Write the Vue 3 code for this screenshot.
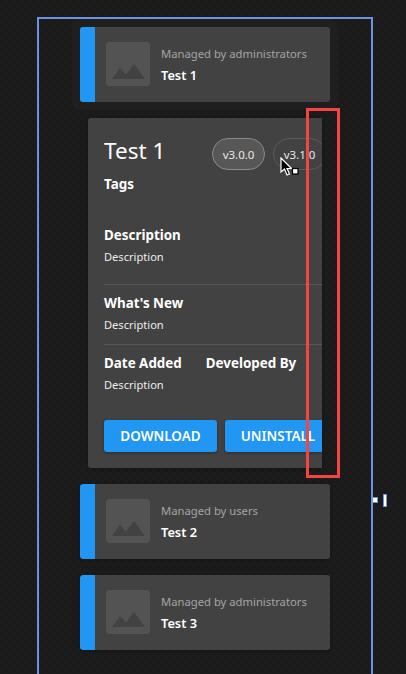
<script setup>
const cards = [
  { by: 'Managed by administrators', name: 'Test 1' },
  { by: 'Managed by users', name: 'Test 2' },
  { by: 'Managed by administrators', name: 'Test 3' },
]
</script>

<template>
  <div class="page">
    <div class="stack">
      <div class="card card-hover">
        <span class="stripe"></span>
        <div class="thumb">
          <svg viewBox="0 0 44 44" width="44" height="44"><path d="M6 37 14 26 20 32.5 28 22 39 37Z" /></svg>
        </div>
        <div class="meta">
          <div class="by">{{ cards[0].by }}</div>
          <div class="name">{{ cards[0].name }}</div>
        </div>
      </div>

      <section class="detail">
        <div class="head">
          <h1 class="title">Test 1</h1>
          <div class="pills">
            <span class="pill active">v3.0.0</span>
            <span class="pill">v3.1.0</span>
          </div>
        </div>
        <h2 class="label tags">Tags</h2>
        <div class="block first">
          <h2 class="label">Description</h2>
          <p class="text">Description</p>
        </div>
        <div class="block">
          <h2 class="label">What's New</h2>
          <p class="text">Description</p>
        </div>
        <div class="block last">
          <div class="columns">
            <h2 class="label">Date Added</h2>
            <h2 class="label">Developed By</h2>
          </div>
          <p class="text">Description</p>
        </div>
        <div class="actions">
          <button class="btn">DOWNLOAD</button>
          <button class="btn">UNINSTALL</button>
        </div>
      </section>

      <div v-for="c in cards.slice(1)" :key="c.name" class="card">
        <span class="stripe"></span>
        <div class="thumb">
          <svg viewBox="0 0 44 44" width="44" height="44"><path d="M6 37 14 26 20 32.5 28 22 39 37Z" /></svg>
        </div>
        <div class="meta">
          <div class="by">{{ c.by }}</div>
          <div class="name">{{ c.name }}</div>
        </div>
      </div>
    </div>

    <div class="frame"></div>
    <div class="handle"></div>
    <div class="caret"></div>
    <div class="redbox"></div>
    <svg class="cursor" viewBox="0 0 20 20" width="20" height="20">
      <path d="M1 1V15L4.5 12 7 18 9.5 17 7 11.5H11.5Z" fill="#000" stroke="#fff" stroke-width="1.2" />
      <rect x="12.5" y="11.5" width="5.5" height="5.5" fill="#fff" stroke="#000" stroke-width="1.2" />
    </svg>
  </div>
</template>

<style scoped>
.page {
  position: relative;
  width: 406px;
  height: 674px;
  overflow: hidden;
  box-sizing: border-box;
  padding: 27px 0 0 80px;
  background: repeating-conic-gradient(#1c1c1c 0 25%, #1a1a1a 0 50%) 0 0 / 8px 8px;
  font-family: "Noto Sans", "Open Sans", sans-serif;
  color: #fff;
}
.stack {
  width: 250px;
  display: flex;
  flex-direction: column;
  gap: 16px;
}
.card {
  position: relative;
  height: 75px;
  display: flex;
  align-items: center;
  box-sizing: border-box;
  padding-left: 26px;
  gap: 11px;
  background: #424242;
  border-radius: 3px;
  overflow: hidden;
  box-shadow: 0 1px 3px rgba(0, 0, 0, .3);
}
.card-hover {
  overflow: visible;
  box-shadow: 0 0 0 8px #1f1f1f;
}
.stripe {
  position: absolute;
  left: 0;
  top: 0;
  bottom: 0;
  width: 15px;
  background: #2196f3;
  border-radius: 3px 0 0 3px;
}
.thumb {
  width: 44px;
  height: 44px;
  margin-bottom: 1px;
  border-radius: 4px;
  background: #535353;
  flex: none;
}
.thumb svg {
  display: block;
  fill: #424242;
}
.meta {
  display: flex;
  flex-direction: column;
  gap: 2px;
}
.by {
  font-size: 11.25px;
  line-height: 18px;
  color: #a4a4a4;
}
.name {
  font-size: 12.8px;
  line-height: 20px;
  font-weight: 600;
}
.detail {
  margin: 0 8px;
  height: 350px;
  box-sizing: border-box;
  padding: 16px;
  background: #424242;
  border-radius: 3px 0 0 3px;
  overflow: hidden;
  box-shadow: 0 1px 3px rgba(0, 0, 0, .3);
}
.head {
  display: flex;
  justify-content: space-between;
  width: 222px;
  height: 36px;
}
.title {
  margin: 0;
  font-size: 22.5px;
  line-height: 34px;
  font-weight: 400;
}
.pills {
  display: flex;
  gap: 8px;
  margin-top: 4px;
}
.pill {
  width: 53px;
  height: 32px;
  flex: none;
  box-sizing: border-box;
  display: flex;
  align-items: center;
  justify-content: center;
  border-radius: 16px;
  border: 1px solid #5a5a5a;
  font-size: 11.5px;
  color: #e8e8e8;
}
.pill.active {
  background: #575757;
  border-color: #8a8a8a;
}
.label {
  margin: 0;
  font-size: 13.4px;
  line-height: 20px;
  font-weight: 700;
}
.tags {
  margin-top: 4px;
}
.block {
  width: 240px;
  border-top: 1px solid #585858;
  padding-top: 8px;
  height: 51px;
}
.block.first {
  border-top: 0;
  margin-top: 31px;
  padding-top: 0;
  height: 59px;
}
.block.last {
  height: 56px;
}
.text {
  margin: 3px 0 0;
  font-size: 11.1px;
  line-height: 18px;
  color: #ececec;
}
.columns {
  display: flex;
  gap: 24px;
}
.actions {
  display: flex;
  gap: 8px;
  margin-top: 11px;
}
.btn {
  flex: none;
  width: 113px;
  height: 32px;
  border: 0;
  border-radius: 3px;
  background: #2196f3;
  color: #fff;
  font-family: inherit;
  font-size: 13.5px;
  font-weight: 600;
  box-shadow: 0 1px 3px rgba(0, 0, 0, .35);
}
.btn:last-child {
  width: 106px;
}
.frame {
  position: absolute;
  left: 37px;
  top: 17px;
  width: 336px;
  height: 700px;
  box-sizing: border-box;
  border: 2px solid #6a92e6;
}
.handle {
  position: absolute;
  left: 372px;
  top: 497px;
  width: 4px;
  height: 4px;
  background: #fff;
  border: 1px solid #6a92e6;
}
.caret {
  position: absolute;
  left: 383px;
  top: 494px;
  width: 2px;
  height: 11px;
  background: #fff;
  border: 1px solid #6a92e6;
}
.redbox {
  position: absolute;
  left: 306px;
  top: 108px;
  width: 34px;
  height: 370px;
  box-sizing: border-box;
  border: 3px solid #f44444;
}
.cursor {
  position: absolute;
  left: 280px;
  top: 157px;
}
</style>

<style>
html, body { background: #1b1b1b; }
</style>
